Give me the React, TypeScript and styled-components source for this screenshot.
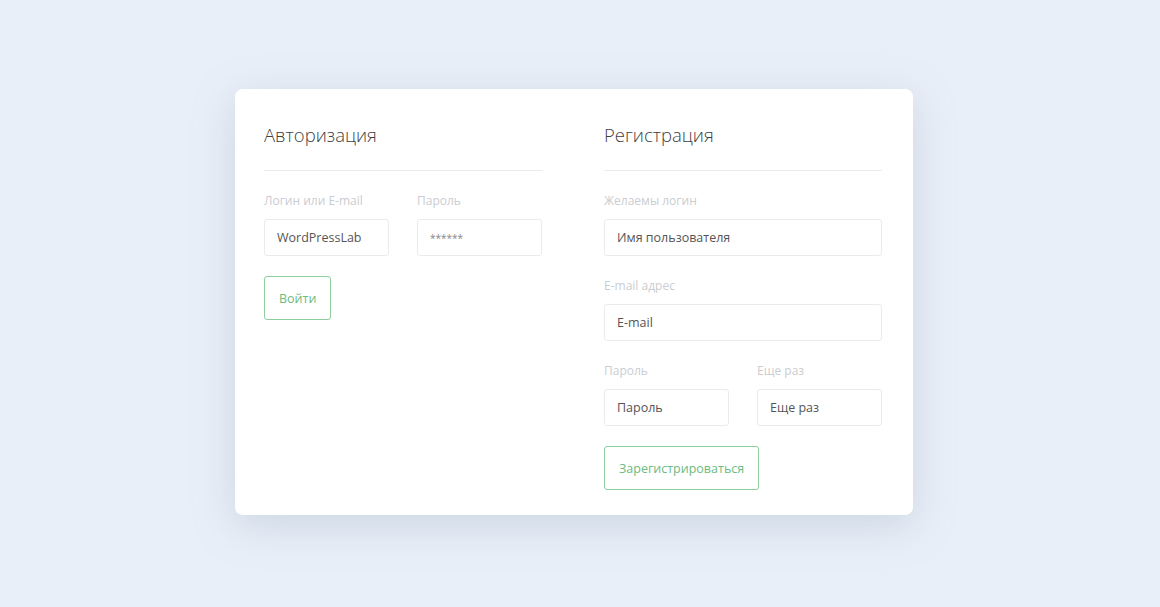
import React from "react";
import styled, { createGlobalStyle } from "styled-components";

const GlobalStyle = createGlobalStyle`
  html, body {
    margin: 0;
    padding: 0;
    background: #e9eff8;
    font-family: "Open Sans", "Noto Sans", sans-serif;
  }
`;

const Page = styled.div`
  min-height: 607px;
  display: flex;
  justify-content: center;
  align-items: flex-start;
  padding: 89px 12px 0 0;
  box-sizing: border-box;
`;

const Card = styled.div`
  width: 678px;
  height: 426px;
  box-sizing: border-box;
  background: #fff;
  border-radius: 8px;
  box-shadow: 0 10px 40px rgba(150, 165, 190, 0.35);
  padding: 20px 31px 0 29px;
  display: grid;
  grid-template-columns: 279px 278px;
  column-gap: 61px;
  align-items: start;
`;

const Column = styled.section`
  display: flex;
  flex-direction: column;
`;

const Title = styled.h2`
  margin: 0;
  font-size: 18.5px;
  font-weight: 300;
  color: #3f3f3f;
  line-height: 52px;
  padding-bottom: 9px;
  border-bottom: 1px solid #ebebeb;
`;

const Body = styled.div`
  padding-top: 20px;
  display: flex;
  flex-direction: column;
  gap: 20px;
`;

const Row = styled.div<{ $cols?: number }>`
  display: grid;
  grid-template-columns: ${(p) => (p.$cols === 2 ? "125px 125px" : "1fr")};
  column-gap: 28px;
`;

const Field = styled.label`
  display: flex;
  flex-direction: column;
`;

const Label = styled.span`
  font-size: 12px;
  color: #cacdd1;
  line-height: 20px;
  margin-bottom: 8px;
`;

const Input = styled.input<{ $secret?: boolean }>`
  height: 37px;
  box-sizing: border-box;
  border: 1px solid #e9ebee;
  border-radius: 3px;
  padding: 0 12px;
  font-family: inherit;
  font-size: ${(p) => (p.$secret ? "10px" : "12.5px")};
  color: ${(p) => (p.$secret ? "#888" : "#555")};
  outline: none;
  &::placeholder {
    color: #555;
  }
`;

const Button = styled.button`
  align-self: flex-start;
  height: 44px;
  padding: 0 14px;
  background: #fff;
  border: 1px solid #8fce9c;
  border-radius: 3px;
  font-family: inherit;
  font-size: 12.5px;
  color: #6dbb80;
  cursor: pointer;
`;

export default function App() {
  return (
    <>
      <GlobalStyle />
      <Page>
        <Card>
          <Column>
            <Title>Авторизация</Title>
            <Body>
              <Row $cols={2}>
                <Field>
                  <Label>Логин или E-mail</Label>
                  <Input defaultValue="WordPressLab" />
                </Field>
                <Field>
                  <Label>Пароль</Label>
                  <Input $secret defaultValue="******" />
                </Field>
              </Row>
              <Button>Войти</Button>
            </Body>
          </Column>
          <Column>
            <Title>Регистрация</Title>
            <Body>
              <Row>
                <Field>
                  <Label>Желаемы логин</Label>
                  <Input placeholder="Имя пользователя" />
                </Field>
              </Row>
              <Row>
                <Field>
                  <Label>E-mail адрес</Label>
                  <Input placeholder="E-mail" />
                </Field>
              </Row>
              <Row $cols={2}>
                <Field>
                  <Label>Пароль</Label>
                  <Input placeholder="Пароль" />
                </Field>
                <Field>
                  <Label>Еще раз</Label>
                  <Input placeholder="Еще раз" />
                </Field>
              </Row>
              <Button>Зарегистрироваться</Button>
            </Body>
          </Column>
        </Card>
      </Page>
    </>
  );
}
